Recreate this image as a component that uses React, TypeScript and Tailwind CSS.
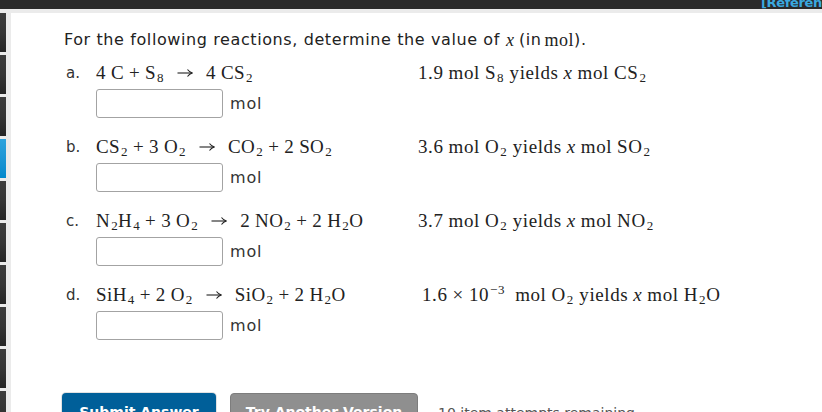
import type { ReactNode } from "react"

const serif = "font-['Liberation_Serif','Times_New_Roman',serif]"

function Sub({ children }: { children: ReactNode }) {
  return <sub className="text-[13px] ml-[1px]">{children}</sub>
}

function Plus() {
  return <span className="mx-[5px]">+</span>
}

function Arrow() {
  return (
    <svg className="inline-block mx-[13px] align-[1px]" width="16" height="10" viewBox="0 0 16 10" aria-label="→">
      <path d="M0.5 5 H15" stroke="#222" strokeWidth="1.1" fill="none" />
      <path d="M10.5 1.5 Q12.5 4.2 15.3 5 Q12.5 5.8 10.5 8.5" stroke="#222" strokeWidth="1.1" fill="none" />
    </svg>
  )
}

function X() {
  return <span className="italic mx-[5px]">x</span>
}

function Sp() {
  return <span className="inline-block w-[5px]" />
}

type Item = { label: string; eq: ReactNode; given: ReactNode }

const items: Item[] = [
  {
    label: "a.",
    eq: (
      <>
        4<Sp />C<Plus />S<Sub>8</Sub>
        <Arrow />4<Sp />CS<Sub>2</Sub>
      </>
    ),
    given: (
      <>
        1.9<Sp />mol<Sp />S<Sub>8</Sub> yields<X />mol<Sp />CS<Sub>2</Sub>
      </>
    ),
  },
  {
    label: "b.",
    eq: (
      <>
        CS<Sub>2</Sub>
        <Plus />3<Sp />O<Sub>2</Sub>
        <Arrow />CO<Sub>2</Sub>
        <Plus />2<Sp />SO<Sub>2</Sub>
      </>
    ),
    given: (
      <>
        3.6<Sp />mol<Sp />O<Sub>2</Sub> yields<X />mol<Sp />SO<Sub>2</Sub>
      </>
    ),
  },
  {
    label: "c.",
    eq: (
      <>
        N<Sub>2</Sub>H<Sub>4</Sub>
        <Plus />3<Sp />O<Sub>2</Sub>
        <Arrow />2<Sp />NO<Sub>2</Sub>
        <Plus />2<Sp />H<Sub>2</Sub>O
      </>
    ),
    given: (
      <>
        3.7<Sp />mol<Sp />O<Sub>2</Sub> yields<X />mol<Sp />NO<Sub>2</Sub>
      </>
    ),
  },
  {
    label: "d.",
    eq: (
      <>
        SiH<Sub>4</Sub>
        <Plus />2<Sp />O<Sub>2</Sub>
        <Arrow />SiO<Sub>2</Sub>
        <Plus />2<Sp />H<Sub>2</Sub>O
      </>
    ),
    given: (
      <>
        <span className="ml-[4px]">1.6</span>
        <span className="mx-[5px]">×</span>10<sup className="text-[13px] ml-[1px]">−3</sup>
        <Sp />
        <Sp />mol<Sp />O<Sub>2</Sub> yields<X />mol<Sp />H<Sub>2</Sub>O
      </>
    ),
  },
]

function Tab({ active }: { active?: boolean }) {
  return (
    <div
      className={
        active
          ? "h-[39px] shrink-0 bg-gradient-to-b from-[#2da3dd] to-[#0088cc]"
          : "h-[39px] shrink-0 bg-gradient-to-b from-[#3d3d3d] via-[#353535] to-[#252525]"
      }
    />
  )
}

export default function App() {
  return (
    <div className="w-[822px] h-[412px] overflow-hidden bg-[#ebebeb] flex flex-col font-['DejaVu_Sans',Verdana,sans-serif] text-[#222]">
      <div className="h-[9px] shrink-0 bg-[#2a2a2a] overflow-hidden flex justify-end items-end">
        <span className="text-[13px] leading-none font-bold text-[#3aa9e0] tracking-tight">[Referen</span>
      </div>
      <div className="flex flex-1 min-h-0">
        <div className="w-[6px] shrink-0 flex flex-col gap-[3px] pt-[4px]">
          <Tab />
          <Tab />
          <Tab />
          <Tab active />
          <Tab />
          <Tab />
          <Tab />
          <Tab />
          <Tab />
          <Tab />
        </div>
        <div className="w-[5px] shrink-0" />
        <main className="flex-1 bg-white mt-[4px] pl-[53px] pt-[17px]">
          <div className="h-[20px] flex items-center text-[16px] tracking-[0.6px]">
            For the following reactions, determine the value of
            <span className={`${serif} italic text-[18px] ml-[6px] mr-[5px] tracking-normal`}>x</span>
            (in <span className={`${serif} text-[18px] ml-[3px] tracking-[0.5px]`}>mol</span>).
          </div>
          <div className="mt-[11px] flex flex-col gap-[17px]">
            {items.map((it) => (
              <div key={it.label}>
                <div className="h-[24px] flex items-center">
                  <span className="w-[32px] pl-[2px] text-[15px] text-[#333]">{it.label}</span>
                  <span className={`${serif} text-[19px] w-[322px] whitespace-nowrap tracking-[0.4px]`}>{it.eq}</span>
                  <span className={`${serif} text-[19px] whitespace-nowrap tracking-[0.6px]`}>{it.given}</span>
                </div>
                <div className="mt-[4px] ml-[32px] flex items-center">
                  <input
                    className="w-[127px] h-[29px] border border-[#a3a3a3] rounded-[3px] bg-white outline-none"
                    type="text"
                  />
                  <span className="ml-[7px] text-[16px] tracking-[0.8px] text-[#333]">mol</span>
                </div>
              </div>
            ))}
          </div>
          <div className="mt-[53px] -ml-[2px] flex items-start">
            <button className="w-[154px] h-[38px] rounded-[4px] bg-[#005f99] text-white text-[14px] font-bold shadow-[0_0_0_1px_#e2e2e2]">
              Submit Answer
            </button>
            <button className="ml-[14px] w-[188px] h-[38px] rounded-[4px] bg-[#8f8f8f] border border-[#7d7d7d] text-white text-[14px] font-bold">
              Try Another Version
            </button>
            <span className="ml-[20px] mt-[10px] text-[14px] text-[#555]">10 item attempts remaining</span>
          </div>
        </main>
      </div>
    </div>
  )
}
